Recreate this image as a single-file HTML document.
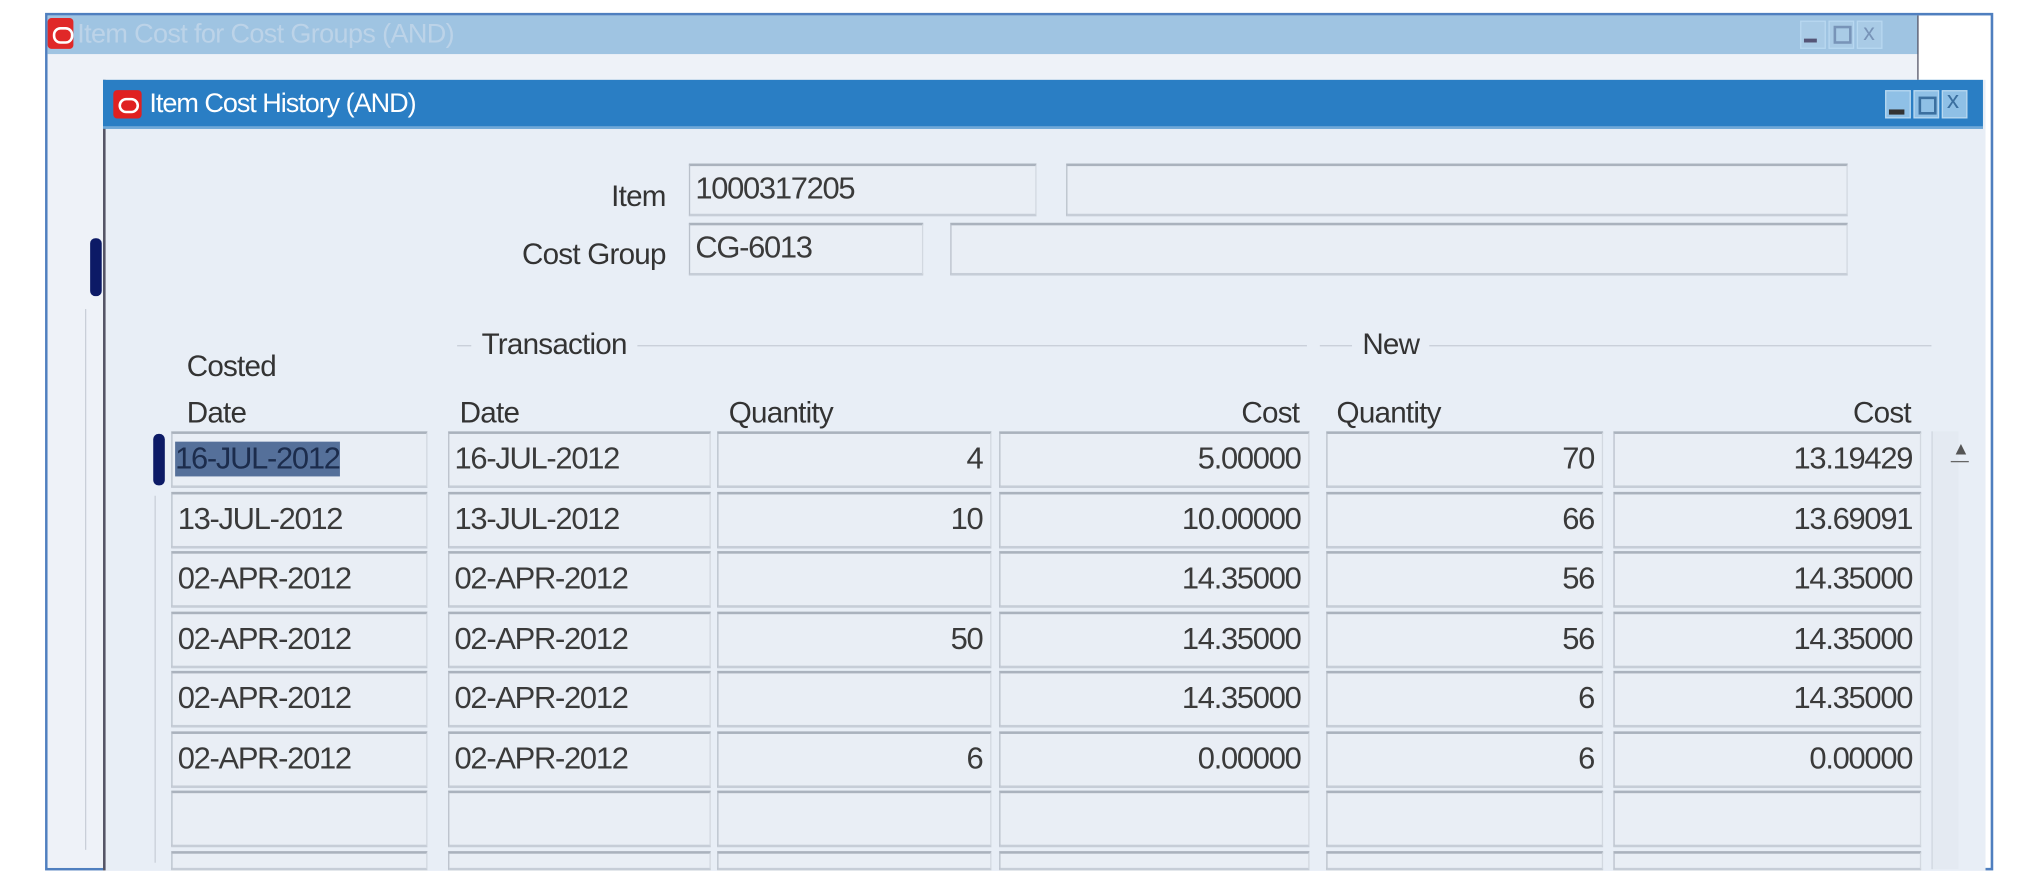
<!DOCTYPE html>
<html><head><style>
html,body{margin:0;padding:0;background:#fff;width:2019px;height:882px;overflow:hidden}
#w{position:absolute;left:0;top:0;width:1568px;height:685px;transform:scale(1.28763);transform-origin:0 0;font-family:"Liberation Sans",Arial,sans-serif;color:#333}
.a{position:absolute}
.f{position:absolute;background:#e9eef5;border-top:2px solid #aab2bd;border-left:1px solid #b9c0ca;border-right:1px solid #d2d8e0;border-bottom:2px solid #c6cdd7;box-sizing:border-box;font-size:24px;letter-spacing:-1px;line-height:40px;color:#3a3a3a;padding:0 6px 0 4px;white-space:nowrap;overflow:hidden}
.r{text-align:right}
.l{position:absolute;font-size:23px;letter-spacing:-0.6px;color:#333}
.btn{position:absolute;width:20px;height:22px;background:#8fc0e6;border:1px solid #b8d8f0;box-sizing:border-box}
</style></head><body><div id="w">
<div class="a" style="left:35px;top:10px;width:1513px;height:666px;border:2px solid #4f7fbf;box-sizing:border-box;background:#fff"></div>
<div class="a" style="left:37px;top:12px;width:1453px;height:662px;background:#eef2f8"></div>
<div class="a" style="left:37px;top:12px;width:1453px;height:30px;background:#9fc4e2"></div>
<div class="a" style="left:37px;top:14px;width:20px;height:24px;background:#e02828;border-radius:3px"></div>
<div class="a" style="left:41px;top:21px;width:12px;height:9px;border:2px solid #fff;border-radius:6px"></div>
<div class="a" style="left:60px;top:15px;font-size:21px;letter-spacing:-0.5px;color:#bcd3e8">Item Cost for Cost Groups (AND)</div>
<div class="btn" style="left:1398px;top:16px;background:#a9cbe6"></div><div class="btn" style="left:1420px;top:16px;background:#a9cbe6"></div><div class="btn" style="left:1442px;top:16px;background:#a9cbe6"></div>
<div class="a" style="left:1401px;top:30px;width:10px;height:3px;background:#557"></div>
<div class="a" style="left:1424px;top:20px;width:10px;height:10px;border:2px solid #7894b8"></div>
<div class="a" style="left:1447px;top:15px;font-size:18px;color:#7894b8">x</div>
<div class="a" style="left:1489px;top:12px;width:1px;height:60px;background:#556"></div>
<div class="a" style="left:70px;top:185px;width:9px;height:45px;background:#0c1a66;border-radius:4px"></div>
<div class="a" style="left:66px;top:240px;width:1px;height:420px;background:#c9cfd8"></div>
<div class="a" style="left:80px;top:62px;width:1460px;height:614px;background:#e8eef6;border-left:2px solid #556"></div>
<div class="a" style="left:80px;top:62px;width:1460px;height:36px;background:#2a7ec4;border-bottom:2px solid #6fa8d8"></div>
<div class="a" style="left:88px;top:70px;width:22px;height:22px;background:#e02020;border-radius:3px"></div>
<div class="a" style="left:92px;top:76px;width:12px;height:8px;border:2px solid #fff;border-radius:6px"></div>
<div class="a" style="left:116px;top:69px;font-size:21px;color:#fff;letter-spacing:-0.8px">Item Cost History (AND)</div>
<div class="btn" style="left:1464px;top:70px"></div><div class="btn" style="left:1486px;top:70px"></div><div class="btn" style="left:1508px;top:70px"></div>
<div class="a" style="left:1467px;top:85px;width:12px;height:4px;background:#333"></div>
<div class="a" style="left:1490px;top:75px;width:10px;height:10px;border:2px solid #3b6f9f"></div>
<div class="a" style="left:1512px;top:68px;font-size:19px;color:#3b6f9f">x</div>
<div class="l" style="left:430px;top:139px;width:87px;text-align:right">Item</div>
<div class="f" style="left:535px;top:127px;width:270px;height:41px;line-height:36px">1000317205</div>
<div class="f" style="left:828px;top:127px;width:607px;height:41px"></div>
<div class="l" style="left:360px;top:184px;width:157px;text-align:right">Cost Group</div>
<div class="f" style="left:535px;top:173px;width:182px;height:41px;line-height:36px">CG-6013</div>
<div class="f" style="left:738px;top:173px;width:697px;height:41px"></div>
<div class="a" style="left:355px;top:268px;width:660px;height:1px;background:#c8ced8"></div>
<div class="l" style="left:366px;top:254px;background:#e8eef6;padding:0 8px">Transaction</div>
<div class="a" style="left:1025px;top:268px;width:475px;height:1px;background:#c8ced8"></div>
<div class="l" style="left:1050px;top:254px;background:#e8eef6;padding:0 8px">New</div>
<div class="l" style="left:145px;top:271px">Costed</div>
<div class="l" style="left:145px;top:307px">Date</div>
<div class="l" style="left:357px;top:307px">Date</div>
<div class="l" style="left:566px;top:307px">Quantity</div>
<div class="l" style="left:900px;top:307px;width:109px;text-align:right">Cost</div>
<div class="l" style="left:1038px;top:307px">Quantity</div>
<div class="l" style="left:1380px;top:307px;width:104px;text-align:right">Cost</div>
<div class="a" style="left:119px;top:337px;width:9px;height:40px;background:#0c1a66;border-radius:4px"></div>
<div class="a" style="left:120px;top:385px;width:6px;height:285px;border-left:1px solid #c9cfd8"></div>
<div class="a" style="left:1500px;top:335px;width:20px;height:340px;background:#e4eaf2;border-left:1px solid #cfd6df"></div>
<div class="a" style="left:1516px;top:340px;font-size:14px;color:#555">&#9650;</div>
<div class="a" style="left:1515px;top:358px;width:14px;height:1px;background:#666"></div>
<div id="rows"></div>
</div>
<script>
var cols=[[133,199,0],[348,204,0],[557,213,1],[776,241,1],[1030,215,1],[1253,239,1]];
var data=[["16-JUL-2012","16-JUL-2012","4","5.00000","70","13.19429"],
["13-JUL-2012","13-JUL-2012","10","10.00000","66","13.69091"],
["02-APR-2012","02-APR-2012","","14.35000","56","14.35000"],
["02-APR-2012","02-APR-2012","50","14.35000","56","14.35000"],
["02-APR-2012","02-APR-2012","","14.35000","6","14.35000"],
["02-APR-2012","02-APR-2012","6","0.00000","6","0.00000"],
["","","","","",""],["","","","","",""]];
var h="";
for(var r=0;r<8;r++){var y=335+r*46.5;for(var c=0;c<6;c++){var t=data[r][c];
if(r==0&&c==0)t='<span style="background:#55709a;color:#1c2c4c;margin-left:-2px">'+t+'</span>';
var hh=r==7?676-y:44;
h+='<div class="f'+(cols[c][2]?' r':'')+'" style="left:'+cols[c][0]+'px;top:'+y+'px;width:'+cols[c][1]+'px;height:'+hh+'px">'+t+'</div>';}}
document.getElementById("rows").innerHTML=h;
</script>
</body></html>
